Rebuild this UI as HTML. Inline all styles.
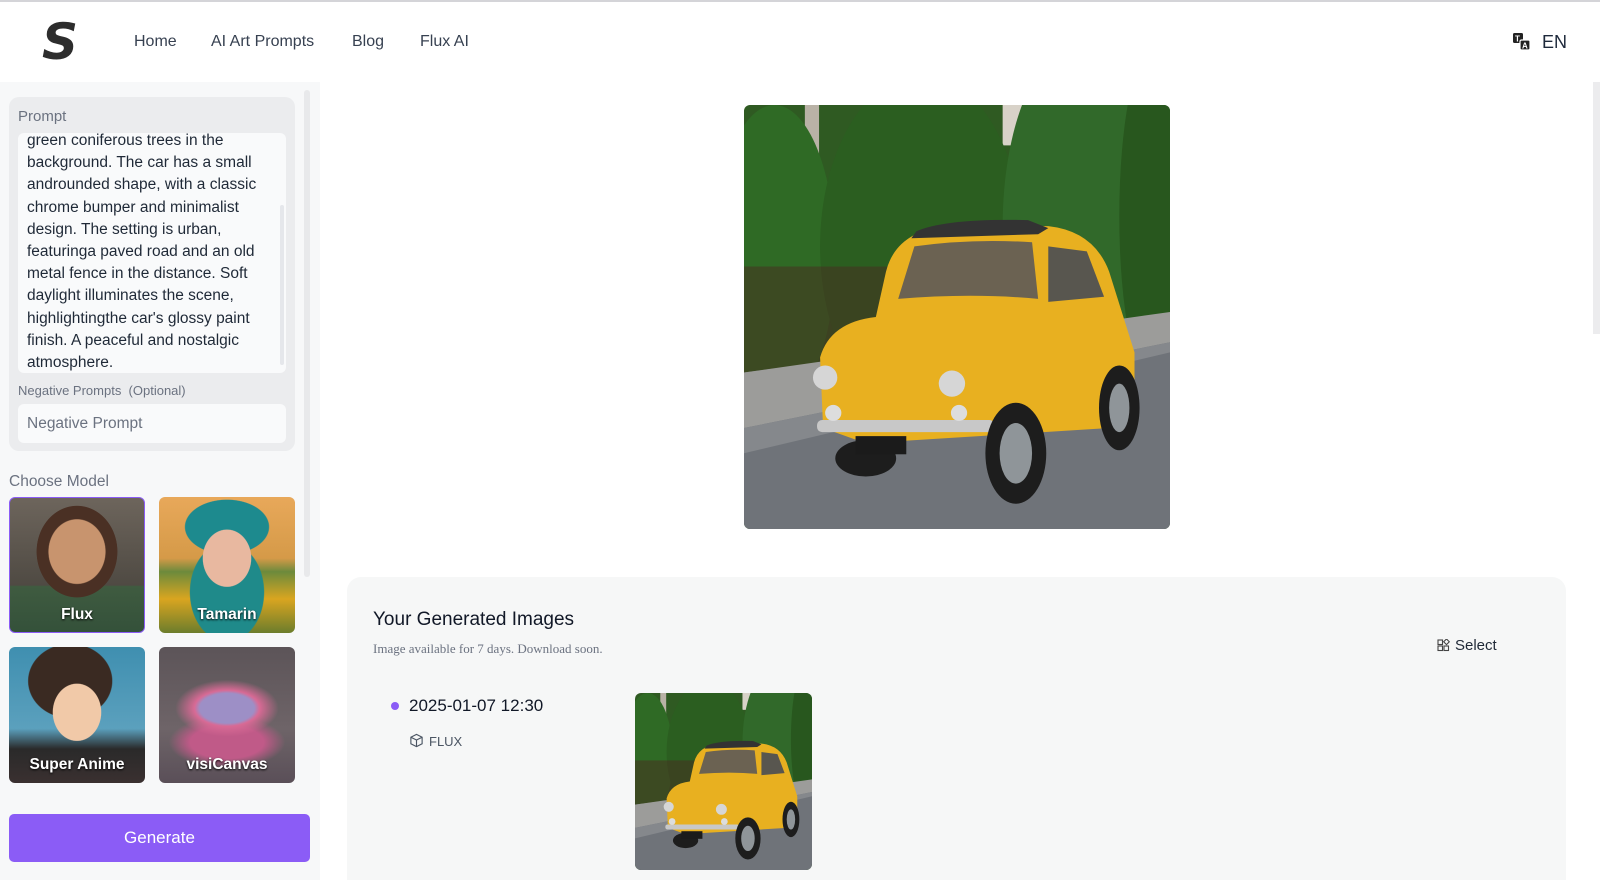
<!DOCTYPE html>
<html><head><meta charset="utf-8">
<style>
*{box-sizing:border-box;margin:0;padding:0}
html,body{width:1600px;height:880px;overflow:hidden}
body{background:#fff;font-family:"Liberation Sans","DejaVu Sans",sans-serif;position:relative;color:#1f2937}
.abs{position:absolute}
.nav{font-size:16px;color:#374151;top:33px}
</style></head><body>
<div class="abs" style="left:0;top:0;width:1600px;height:2px;background:#d4d4d8"></div>
<div class="abs" style="left:42px;top:14px;font-size:50px;font-weight:bold;font-style:italic;color:#2d2d2d;font-family:'DejaVu Sans',sans-serif;line-height:56px">S</div>
<div class="abs nav" style="left:134px">Home</div>
<div class="abs nav" style="left:211px">AI Art Prompts</div>
<div class="abs nav" style="left:352px">Blog</div>
<div class="abs nav" style="left:420px">Flux AI</div>
<svg class="abs" style="left:1512px;top:32px" width="20" height="20" viewBox="0 0 20 20"><rect x="1" y="1" width="10" height="10" rx="1.5" fill="#222"/><rect x="8" y="8" width="10" height="10" rx="1.5" fill="#222" stroke="#fff" stroke-width="1.2"/><text x="3" y="9.5" font-size="8" fill="#fff" font-family="Liberation Sans" font-weight="bold">T</text><text x="10" y="16.5" font-size="8" fill="#fff" font-family="Liberation Sans" font-weight="bold">A</text></svg>
<div class="abs" style="left:1542px;top:32px;font-size:18px;color:#1e293b">EN</div>

<div class="abs" style="left:0;top:82px;width:320px;height:798px;background:#f7f8f9"></div>
<div class="abs" style="left:304px;top:90px;width:6px;height:487px;background:#e8e9eb;border-radius:3px"></div>
<div class="abs" style="left:9px;top:97px;width:286px;height:354px;background:#ebecee;border-radius:10px"></div>
<div class="abs" style="left:18px;top:108px;font-size:15px;color:#6b7280">Prompt</div>
<div class="abs" style="left:18px;top:133px;width:268px;height:240px;background:#f9fafb;border-radius:6px;overflow:hidden"></div>
<div class="abs" style="left:27px;top:130px;width:250px;font-size:15.5px;line-height:22.2px;color:#1f2937">green coniferous trees in the background. The car has a small androunded shape, with a classic chrome bumper and minimalist design. The setting is urban, featuringa paved road and an old metal fence in the distance. Soft daylight illuminates the scene, highlightingthe car's glossy paint finish. A peaceful and nostalgic atmosphere.</div>
<div class="abs" style="left:280px;top:205px;width:4px;height:160px;background:#e5e7eb;border-radius:2px"></div>
<div class="abs" style="left:18px;top:383px;font-size:13px;color:#6b7280">Negative Prompts &nbsp;(Optional)</div>
<div class="abs" style="left:18px;top:404px;width:268px;height:39px;background:#f9fafb;border-radius:6px;padding:11px 9px;font-size:15.5px;color:#6b7280">Negative Prompt</div>
<div class="abs" style="left:9px;top:473px;font-size:15.5px;color:#6b7280">Choose Model</div>

<div class="abs" style="left:9px;top:497px;width:136px;height:136px;border-radius:6px;border:1.5px solid #8b5cf6;overflow:hidden;background:radial-gradient(ellipse 30% 34% at 50% 40%,#c8946e 0 70%,#4a3024 72% 100%,transparent 101%),linear-gradient(#6d655c,#4f4a43 65%,#3f5b40 66%,#34513a)"></div>
<div class="abs" style="left:159px;top:497px;width:136px;height:136px;border-radius:6px;overflow:hidden;background:radial-gradient(ellipse 22% 26% at 50% 45%,#e8b8a0 0 80%,transparent 82%),radial-gradient(ellipse 34% 22% at 50% 22%,#1d8a8e 0 90%,transparent 92%),radial-gradient(ellipse 30% 40% at 50% 70%,#1f8a8a 0 90%,transparent 92%),linear-gradient(#e8a85a,#d59a48 45%,#6c8a3c 55%,#d9a520 75%,#6c7d2c)"></div>
<div class="abs" style="left:9px;top:647px;width:136px;height:136px;border-radius:6px;overflow:hidden;background:radial-gradient(ellipse 22% 26% at 50% 48%,#f1c9a8 0 80%,transparent 82%),radial-gradient(ellipse 34% 30% at 45% 25%,#3a2a22 0 90%,transparent 92%),linear-gradient(#3f8fb0,#5ba0bd 60%,#2a2a2a 75%,#3a3030)"></div>
<div class="abs" style="left:159px;top:647px;width:136px;height:136px;border-radius:6px;overflow:hidden;background:radial-gradient(ellipse 40% 22% at 50% 45%,#9d8fc6 0 50%,#d86a95 60%,transparent 95%),radial-gradient(ellipse 45% 20% at 50% 70%,#c05a88 0 60%,transparent 95%),linear-gradient(#5c5458,#6e6468 60%,#5a4f58)"></div>
<div class="abs" style="left:9px;top:606px;width:136px;text-align:center;color:#fff;font-size:15.5px;font-weight:bold;text-shadow:0 1px 2px #000">Flux</div>
<div class="abs" style="left:159px;top:606px;width:136px;text-align:center;color:#fff;font-size:15.5px;font-weight:bold;text-shadow:0 1px 2px #000">Tamarin</div>
<div class="abs" style="left:9px;top:756px;width:136px;text-align:center;color:#fff;font-size:15.5px;font-weight:bold;text-shadow:0 1px 2px #000">Super Anime</div>
<div class="abs" style="left:159px;top:756px;width:136px;text-align:center;color:#fff;font-size:15.5px;font-weight:bold;text-shadow:0 1px 2px #000">visiCanvas</div>
<div class="abs" style="left:9px;top:814px;width:301px;height:48px;background:#8b5cf6;border-radius:5px;color:#fff;font-size:17px;text-align:center;line-height:48px">Generate</div>

<div class="abs" style="left:1593px;top:82px;width:7px;height:252px;background:#ececee"></div>

<svg width="0" height="0" style="position:absolute"><defs>
<g id="car">
<rect width="420" height="420" fill="#2f5a22"/>
<rect x="60" y="0" width="14" height="130" fill="#b9b2a6"/>
<rect x="255" y="0" width="40" height="40" fill="#d8d2c8"/>
<ellipse cx="30" cy="150" rx="60" ry="150" fill="#2f6a25"/>
<ellipse cx="175" cy="140" rx="100" ry="170" fill="#2b5e20"/>
<ellipse cx="330" cy="120" rx="75" ry="180" fill="#31692a"/>
<ellipse cx="405" cy="110" rx="35" ry="170" fill="#28571e"/>
<rect x="0" y="160" width="170" height="120" fill="#4a2a1f" opacity=".5"/>
<polygon points="0,265 420,210 420,420 0,420" fill="#6f7379"/>
<polygon points="0,265 420,205 420,235 0,320" fill="#9c9c9a"/>
<polygon points="0,320 420,235 420,245 0,345" fill="#85888c"/>
<path d="M140 165 Q150 125 200 120 L300 120 Q345 125 360 165 L385 245 L385 300 L360 320 L120 335 L78 320 L75 250 Q85 215 130 210 Z" fill="#e8b020"/>
<path d="M170 125 Q200 112 280 114 L300 122 L290 128 L165 132 Z" fill="#333"/>
<path d="M152 192 L168 140 Q225 132 284 136 L290 192 Q225 186 152 192 Z" fill="#6b6252"/>
<path d="M300 140 L338 145 L355 190 L300 195 Z" fill="#58564f"/>
<rect x="72" y="312" width="175" height="12" rx="5" fill="#c8c8c8"/>
<circle cx="80" cy="270" r="12" fill="#d6d6d6"/><circle cx="205" cy="276" r="13" fill="#d6d6d6"/>
<circle cx="88" cy="305" r="8" fill="#ddd"/><circle cx="212" cy="305" r="8" fill="#ddd"/>
<ellipse cx="268" cy="345" rx="30" ry="50" fill="#1d1d1d"/><ellipse cx="268" cy="345" rx="16" ry="30" fill="#8f9599"/>
<ellipse cx="370" cy="300" rx="20" ry="42" fill="#1d1d1d"/><ellipse cx="370" cy="300" rx="10" ry="24" fill="#8f9599"/>
<ellipse cx="120" cy="350" rx="30" ry="18" fill="#1d1d1d"/>
<rect x="110" y="328" width="50" height="18" fill="#1b1b1b"/>
</g></defs></svg>

<svg class="abs" style="left:744px;top:105px;border-radius:6px" width="426" height="424" viewBox="0 0 420 420" preserveAspectRatio="none"><use href="#car"/></svg>

<div class="abs" style="left:347px;top:577px;width:1219px;height:330px;background:#f6f7f7;border-radius:14px"></div>
<div class="abs" style="left:373px;top:609px;font-size:19px;color:#111827">Your Generated Images</div>
<div class="abs" style="left:373px;top:641px;font-size:13px;color:#6b7280;font-family:'Liberation Serif',serif">Image available for 7 days. Download soon.</div>
<svg class="abs" style="left:1437px;top:639px" width="13" height="13" viewBox="0 0 13 13" fill="none" stroke="#444" stroke-width="1.1"><rect x="1" y="7" width="4.5" height="4.5"/><rect x="7" y="7" width="4.5" height="4.5"/><rect x="1" y="1" width="4.5" height="4.5"/><rect x="7.5" y="0.8" width="4" height="4" transform="rotate(45 9.5 2.8)"/></svg>
<div class="abs" style="left:1455px;top:637px;font-size:15px;color:#1f2937">Select</div>
<div class="abs" style="left:391px;top:702px;width:8px;height:8px;border-radius:50%;background:#8b5cf6"></div>
<div class="abs" style="left:409px;top:696px;font-size:17px;color:#111827">2025-01-07 12:30</div>
<svg class="abs" style="left:409px;top:733px" width="15" height="15" viewBox="0 0 16 16" fill="none" stroke="#4b5563" stroke-width="1.2"><path d="M8 1.5 14 4.5V11.5L8 14.5 2 11.5V4.5Z M2 4.5 8 7.5 14 4.5 M8 7.5V14.5"/></svg>
<div class="abs" style="left:429px;top:734px;font-size:13px;color:#4b5563">FLUX</div>
<svg class="abs" style="left:635px;top:693px;border-radius:6px" width="177" height="177" viewBox="0 0 420 420" preserveAspectRatio="none"><use href="#car"/></svg>
</body></html>
